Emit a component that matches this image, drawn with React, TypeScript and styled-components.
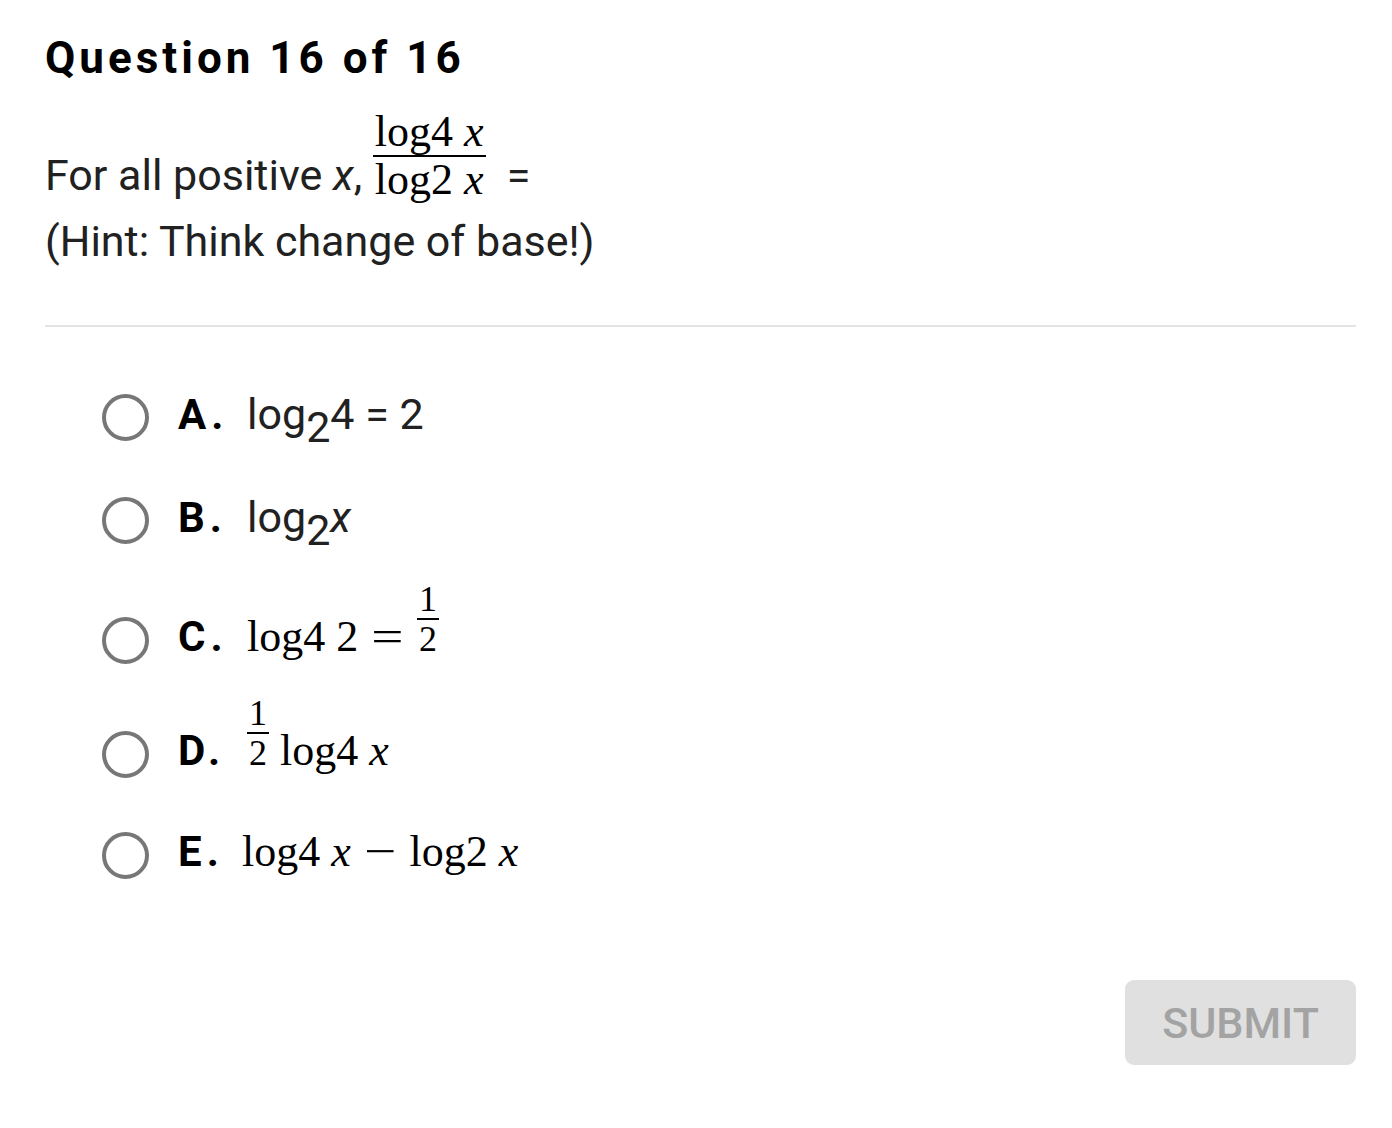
import { createGlobalStyle, styled } from 'styled-components';

const GlobalStyle = createGlobalStyle`
  html, body {
    margin: 0;
    padding: 0;
    background: #ffffff;
  }
  body {
    font-family: Roboto, "Liberation Sans", sans-serif;
    color: #212121;
  }
`;

const Page = styled.div`
  width: 1392px;
  min-height: 1128px;
  box-sizing: border-box;
  padding: 30px 36px 0 45px;
  display: flex;
  flex-direction: column;
`;

const Title = styled.h1`
  margin: 0;
  font-size: 44px;
  font-weight: 700;
  letter-spacing: 4px;
  color: #000;
  line-height: 56px;
`;

const Prompt = styled.div`
  margin-top: 24px;
  font-size: 43px;
  line-height: 66px;
  color: #212121;
`;

const Line = styled.div`
  white-space: nowrap;
`;

const Math = styled.span<{ shift?: number }>`
  font-family: "Liberation Serif", "DejaVu Serif", serif;
  font-size: 44px;
  color: #000;
  white-space: nowrap;
  margin-left: ${({ shift }) => shift ?? 0}px;
`;

const Var = styled.i`
  font-family: "Liberation Serif", "DejaVu Serif", serif;
  margin-left: 0.25em;
`;

const Op = styled.span`
  display: inline-block;
  transform: scaleX(1.3);
  margin: 0 17px;
`;

const Frac = styled.span<{ size: number; raise: number; tuck?: boolean }>`
  display: inline-flex;
  flex-direction: column;
  align-items: center;
  vertical-align: ${({ raise }) => raise}px;
  margin-top: ${({ raise, tuck }) => (tuck ? -raise : 0)}px;
  font-family: "Liberation Serif", "DejaVu Serif", serif;
  font-size: ${({ size }) => size}px;
  line-height: 1;
  color: #000;
  & > span:first-child {
    border-bottom: 2px solid #000;
    padding: 0 2px 1px;
  }
  & > span:last-child {
    padding-top: 1px;
  }
`;

const Divider = styled.hr`
  margin: 51px 0 0;
  border: none;
  border-top: 2px solid #e4e4e4;
`;

const Options = styled.div`
  display: flex;
  flex-direction: column;
  padding: 40px 0 0 57px;
`;

const Option = styled.label<{ height: number }>`
  display: flex;
  align-items: center;
  height: ${({ height }) => height}px;
  cursor: pointer;
`;

const Radio = styled.span`
  width: 39px;
  height: 39px;
  border: 4px solid #777;
  border-radius: 50%;
  flex-shrink: 0;
`;

const Body = styled.span`
  display: flex;
  align-items: baseline;
  margin-bottom: 7px;
`;

const Letter = styled.span`
  font-weight: 700;
  font-size: 42px;
  color: #000;
  margin-left: 29px;
  width: 69px;
  letter-spacing: 5px;
  flex-shrink: 0;
`;

const Plain = styled.span`
  font-size: 43px;
  color: #212121;
  & sub {
    font-size: 43px;
    vertical-align: -0.3em;
    line-height: 0;
  }
`;

const Footer = styled.div`
  display: flex;
  justify-content: flex-end;
  margin-top: 71px;
`;

const Submit = styled.button`
  width: 231px;
  height: 85px;
  border: none;
  border-radius: 9px;
  background: #e0e0e0;
  color: #a3a3a3;
  font-family: Roboto, "Liberation Sans", sans-serif;
  font-size: 43px;
  font-weight: 500;
`;

const Half = () => (
  <Frac size={36} raise={40} tuck>
    <span>1</span>
    <span>2</span>
  </Frac>
);

const App = () => {
  return (
    <>
      <GlobalStyle />
      <Page>
        <Title>Question 16 of 16</Title>
        <Prompt>
          <Line>
            For all positive <i>x</i>,{' '}
            <Frac size={44} raise={44}>
              <span>log4<Var>x</Var></span>
              <span>log2<Var>x</Var></span>
            </Frac>
            {'  '}&nbsp;=
          </Line>
          <Line>(Hint: Think change of base!)</Line>
        </Prompt>
        <Divider />
        <Options>
          <Option height={100}>
            <Radio />
            <Body>
              <Letter>A.</Letter>
              <Plain>log<sub>2</sub>4 = 2</Plain>
            </Body>
          </Option>
          <Option height={106}>
            <Radio />
            <Body>
              <Letter>B.</Letter>
              <Plain>log<sub>2</sub><i>x</i></Plain>
            </Body>
          </Option>
          <Option height={134}>
            <Radio />
            <Body>
              <Letter>C.</Letter>
              <Math>
                log4 2<Op>=</Op><Half />
              </Math>
            </Body>
          </Option>
          <Option height={94}>
            <Radio />
            <Body>
              <Letter>D.</Letter>
              <Math>
                <Half /> log4<Var>x</Var>
              </Math>
            </Body>
          </Option>
          <Option height={108}>
            <Radio />
            <Body>
              <Letter>E.</Letter>
              <Math shift={-5}>
                log4<Var>x</Var><Op>&minus;</Op>log2<Var>x</Var>
              </Math>
            </Body>
          </Option>
        </Options>
        <Footer>
          <Submit>SUBMIT</Submit>
        </Footer>
      </Page>
    </>
  );
};

export default App;
